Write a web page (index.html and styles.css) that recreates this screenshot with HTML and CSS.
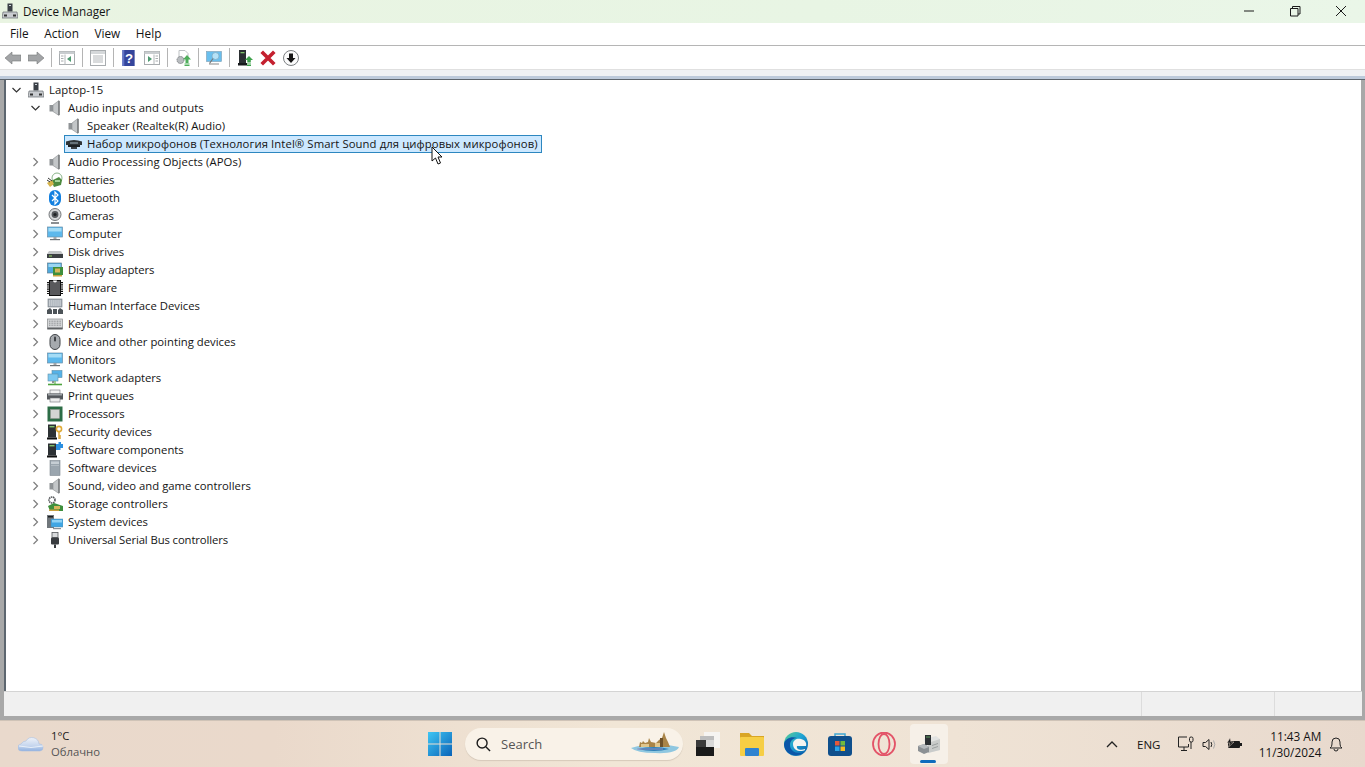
FILE: index.html
```html
<!DOCTYPE html>
<html lang="en">
<head>
<meta charset="utf-8">
<title>Device Manager</title>
<link rel="stylesheet" href="styles.css">
</head>
<body>
<svg class="defs" aria-hidden="true">
  <symbol id="i-laptop" viewBox="0 0 16 16">
    <rect x="5.5" y="0.5" width="5" height="8" fill="#3a3f46"/><rect x="7" y="2" width="2" height="1" fill="#cfd5da"/>
    <path d="M1 9h14l1 6H0z" fill="#c9ccd0" stroke="#666b70" stroke-width=".7"/><rect x="2" y="11.5" width="3" height="2" fill="#333"/><rect x="11" y="11.5" width="3" height="2" fill="#333"/>
  </symbol>
  <symbol id="i-speaker" viewBox="0 0 16 16">
    <rect x="2.5" y="5" width="3.5" height="6.5" fill="#8f9396"/><path d="M6 5l6-4.500v15L6 11.500z" fill="#c3c6c8" stroke="#8b8e90" stroke-width=".6"/><path d="M12 1v14" stroke="#6f7274" stroke-width="1.400"/>
  </symbol>
  <symbol id="i-mic" viewBox="0 0 16 16">
    <path d="M0 5.500Q8 2.500 16 5.500V9H0z" fill="#2f3437"/><rect x="2" y="9" width="12" height="2" fill="#1c2023"/><rect x="5" y="11" width="6" height="2" fill="#3c4145"/><rect x="4" y="6.500" width="8" height="1" fill="#9fb1bd"/>
  </symbol>
  <symbol id="i-battery" viewBox="0 0 16 16">
    <circle cx="10" cy="6" r="5" fill="none" stroke="#8bb58a" stroke-width="1"/><path d="M4 9l8-4 3 3-1 5-7 2z" fill="#4d8a3f"/><path d="M0 11l5-3 2 4-4 3z" fill="#d6b44c"/><path d="M1 6l4 3M0 8l3 2" stroke="#333" stroke-width="1"/><rect x="8" y="8" width="5" height="2" fill="#a6d49a"/>
  </symbol>
  <symbol id="i-bt" viewBox="0 0 16 16">
    <rect x="2" y="0" width="12" height="16" rx="6" fill="#1380e0"/><path d="M5 5l6 6-3 3V2l3 3-6 6" fill="none" stroke="#fff" stroke-width="1.200"/>
  </symbol>
  <symbol id="i-cam" viewBox="0 0 16 16">
    <circle cx="8" cy="6.500" r="6" fill="#d4d6d8" stroke="#74777a"/><circle cx="8" cy="6.500" r="3.400" fill="#55585c"/><circle cx="8" cy="6.500" r="1.600" fill="#1f2225"/><path d="M4 14h8v2H4z" fill="#8c8f92"/>
  </symbol>
  <symbol id="i-monitor" viewBox="0 0 16 16">
    <rect x="0.500" y="1" width="15" height="10" fill="#5cb8ec" stroke="#6a8fa8" stroke-width=".7"/><rect x="1.500" y="2" width="13" height="3.500" fill="#a4dcf6"/><rect x="6.500" y="11" width="3" height="2" fill="#a0a5a9"/><rect x="3" y="13" width="10" height="1.200" fill="#6d7378"/>
  </symbol>
  <symbol id="i-disk" viewBox="0 0 16 16">
    <path d="M2 7h12l2 3H0z" fill="#c4c6c8"/><rect x="0" y="10" width="16" height="4" fill="#3c3f42"/><rect x="2" y="11.500" width="3" height="1" fill="#9adf6a"/>
  </symbol>
  <symbol id="i-display" viewBox="0 0 16 16">
    <rect x="0.500" y="1" width="14" height="10" fill="#4fa9dc" stroke="#5e7f94" stroke-width=".7"/><rect x="1.500" y="2" width="12" height="3" fill="#9bd6f2"/><rect x="6" y="5" width="10" height="8" fill="#3f8f3c"/><rect x="8" y="6.500" width="5" height="4" fill="#d7b65b"/><rect x="6" y="13" width="9" height="1.500" fill="#c8a23e"/>
  </symbol>
  <symbol id="i-firmware" viewBox="0 0 16 16">
    <rect x="2.500" y="0.500" width="11" height="15" fill="#59595c" stroke="#111" stroke-width="1"/><path d="M6 0.500a2 2 0 0 0 4 0" fill="#fff"/><path d="M1 2v12M15 2v12" stroke="#111" stroke-width="2" stroke-dasharray="1.200 1"/>
  </symbol>
  <symbol id="i-hid" viewBox="0 0 16 16">
    <rect x="1" y="1" width="14" height="8" fill="#a8b0b8" stroke="#6f777e" stroke-width=".6"/><path d="M2 3h12M2 5h12M2 7h12" stroke="#e6e8ea" stroke-dasharray="1.300 .8"/><path d="M0 16v-4l3-2 2 2v4M6 16v-5h4v5M11 16v-4l2-2 3 2v4" fill="#4c5358"/>
  </symbol>
  <symbol id="i-kbd" viewBox="0 0 16 16">
    <rect x="0.500" y="3" width="15" height="10" fill="#d5d7d9" stroke="#87898b" stroke-width=".7"/><path d="M2 5.200h12M2 7.200h12M2 9.200h12" stroke="#8a8d90" stroke-dasharray="1 .6"/><rect x="0.500" y="11.500" width="15" height="1.800" fill="#5e6164"/>
  </symbol>
  <symbol id="i-mouse" viewBox="0 0 16 16">
    <rect x="3" y="0.500" width="10" height="15" rx="5" fill="#a6aaae" stroke="#3f4347"/><rect x="7" y="2.500" width="2" height="5" rx="1" fill="#3f4347"/>
  </symbol>
  <symbol id="i-net" viewBox="0 0 16 16">
    <rect x="5" y="0.500" width="10" height="7" fill="#55b2e8" stroke="#5e8fa8" stroke-width=".6"/><rect x="1" y="4" width="10" height="7" fill="#7cc8f0" stroke="#5e8fa8" stroke-width=".6"/><rect x="5" y="11" width="2" height="2" fill="#8c9196"/><path d="M1 14.500h14" stroke="#4ea33e" stroke-width="1.600"/><path d="M8 11v4" stroke="#4ea33e"/>
  </symbol>
  <symbol id="i-print" viewBox="0 0 16 16">
    <rect x="3" y="2" width="10" height="4" fill="#f2f2f2" stroke="#6e7175" stroke-width=".6"/><rect x="0" y="5.500" width="16" height="6" fill="#53575b"/><rect x="1" y="6" width="14" height="1.500" fill="#9ea2a6"/><rect x="3" y="10" width="10" height="4" fill="#eee" stroke="#6e7175" stroke-width=".6"/>
  </symbol>
  <symbol id="i-cpu" viewBox="0 0 16 16">
    <rect x="0.500" y="0.500" width="15" height="15" fill="#2d6d46"/><rect x="3.500" y="3.500" width="9" height="9" fill="#d3d5d2" stroke="#93968f" stroke-width=".5"/>
  </symbol>
  <symbol id="i-sec" viewBox="0 0 16 16">
    <rect x="1" y="0.500" width="8" height="13" fill="#2d3134"/><rect x="2.500" y="2" width="5" height="1.400" fill="#7fc16a"/><rect x="0" y="13.500" width="10" height="2" fill="#111"/><circle cx="12" cy="5" r="2.600" fill="none" stroke="#e0ac3a" stroke-width="1.600"/><path d="M12 7.500V15M12 12h2M12 14h2" stroke="#dca63a" stroke-width="1.400"/>
  </symbol>
  <symbol id="i-comp" viewBox="0 0 16 16">
    <rect x="1" y="1.500" width="8" height="12" fill="#2d3134"/><rect x="2.500" y="3" width="5" height="1.400" fill="#7fc16a"/><rect x="0" y="13.500" width="10" height="2" fill="#111"/><path d="M9 2h2.500V0h2.500v2h2v4h-2.500v2H9z" fill="#2b8fe0"/>
  </symbol>
  <symbol id="i-soft" viewBox="0 0 16 16">
    <rect x="3" y="0.500" width="10" height="15" fill="#9aa5ae" stroke="#7d878f" stroke-width=".6"/><rect x="4" y="1.500" width="8" height="2.500" fill="#c6ced4"/><rect x="4" y="5" width="8" height="1" fill="#b2bbc2"/>
  </symbol>
  <symbol id="i-stor" viewBox="0 0 16 16">
    <circle cx="5" cy="4" r="3" fill="none" stroke="#55585b" stroke-width="1.600" stroke-dasharray="1.500 .6"/><path d="M1 10l6-3 9 3v5H3z" fill="#3f8f3c"/><rect x="7" y="10" width="6" height="3" fill="#d7b65b"/><rect x="2" y="13.500" width="10" height="1.500" fill="#c8a23e"/>
  </symbol>
  <symbol id="i-sys" viewBox="0 0 16 16">
    <rect x="0" y="1" width="7" height="13" fill="#70767b"/><rect x="1" y="2" width="5" height="1.500" fill="#1c1e20"/><rect x="4" y="5" width="12" height="8" fill="#3fa6e4" stroke="#5a8aa6" stroke-width=".5"/><rect x="5" y="6" width="10" height="2.500" fill="#90d2f4"/><rect x="6" y="14" width="8" height="1.200" fill="#8c9196"/>
  </symbol>
  <symbol id="i-usb" viewBox="0 0 16 16">
    <rect x="5" y="0.500" width="6" height="5" fill="#d8dadc" stroke="#55585b" stroke-width=".8"/><rect x="4" y="5.500" width="8" height="7" rx="1" fill="#393c40"/><rect x="7" y="12.500" width="2" height="3.500" fill="#393c40"/>
  </symbol>
  <symbol id="i-chev-r" viewBox="0 0 10 10"><path d="M3 1l4 4-4 4" fill="none" stroke="#7d7d7d" stroke-width="1.200"/></symbol>
  <symbol id="i-chev-d" viewBox="0 0 10 10"><path d="M1 3l4 4 4-4" fill="none" stroke="#333" stroke-width="1.200"/></symbol>
</svg>

<header class="titlebar">
  <svg class="ticon"><use href="#i-laptop"/></svg>
  <span class="ttext">Device Manager</span>
  <div class="winbtns">
    <svg class="wb" viewBox="0 0 46 12"><path d="M18 6h10" stroke="#1a1a1a" fill="none"/></svg>
    <svg class="wb" viewBox="0 0 46 12"><path d="M18.500 3.500h7.500v7.500h-7.500zM20.500 3.500V1.500h7.500v7.500h-2" stroke="#1a1a1a" fill="none"/></svg>
    <svg class="wb" viewBox="0 0 46 12"><path d="M18 1l10 10M28 1L18 11" stroke="#1a1a1a" fill="none"/></svg>
  </div>
</header>

<nav class="menubar">
  <span class="menu">File</span><span class="menu">Action</span><span class="menu">View</span><span class="menu">Help</span>
</nav>

<div class="toolbar">
  <span class="tb"><svg viewBox="0 0 16 14"><path d="M0 7l7-6v3h9v6H7v3z" fill="#a2a4a6" stroke="#77797b" stroke-width=".6"/></svg></span>
  <span class="tb"><svg viewBox="0 0 16 14"><path d="M16 7L9 1v3H0v6h9v3z" fill="#a2a4a6" stroke="#77797b" stroke-width=".6"/></svg></span>
  <i class="sep"></i>
  <span class="tb"><svg viewBox="0 0 16 14"><rect x=".5" y=".5" width="15" height="13" fill="#fff" stroke="#a8acaf"/><rect x=".5" y=".5" width="15" height="2.500" fill="#c9cdd0"/><path d="M6 3.500v10" stroke="#b2b6b9"/><path d="M2 5h2.500M2 7.500h2.500M2 10h2.500" stroke="#a8acaf"/><path d="M12 5v6L8 8z" fill="#4d9a70"/></svg></span>
  <i class="sep"></i>
  <span class="tb"><svg viewBox="0 0 16 16"><rect x=".5" y=".5" width="15" height="15" fill="#fff" stroke="#a8acaf"/><rect x="1" y="1" width="14" height="3" fill="#d5d8da"/><path d="M3 6h10M3 8h10M3 10h10M3 12h10" stroke="#b3b7ba"/></svg></span>
  <i class="sep"></i>
  <span class="tb"><svg viewBox="0 0 14 17"><rect width="13" height="17" fill="#34459c"/><rect x="0" width="2" height="17" fill="#6174c6"/><text class="qmark" x="7" y="13.500">?</text></svg></span>
  <span class="tb"><svg viewBox="0 0 16 14"><rect x=".5" y=".5" width="15" height="13" fill="#fff" stroke="#a8acaf"/><rect x=".5" y=".5" width="15" height="2.500" fill="#c9cdd0"/><path d="M10 3.500v10" stroke="#b2b6b9"/><path d="M11.500 5H14M11.500 7.500H14M11.500 10H14" stroke="#a8acaf"/><path d="M4 5v6l4-3z" fill="#4d9a70"/></svg></span>
  <i class="sep"></i>
  <span class="tb"><svg viewBox="0 0 16 16"><path d="M4 .5h6l3 3v5H4z" fill="#fff" stroke="#bcc0c3"/><circle cx="5.500" cy="10" r="3.500" fill="#b8bcbf" stroke="#82868a" stroke-dasharray="1.500 .6"/><path d="M12 5l4 4.500h-2.500V13h-3V9.500H8z" fill="#4fae5c"/><path d="M9.500 14h5M9.500 15.500h5" stroke="#4fae5c"/></svg></span>
  <i class="sep"></i>
  <span class="tb"><svg viewBox="0 0 16 14"><rect x=".5" y=".5" width="15" height="10" fill="#69bfee" stroke="#7c9db3" stroke-width=".6"/><circle cx="9.500" cy="5" r="3.500" fill="#b5e2f7" stroke="#7ea9c0" stroke-width=".7"/><path d="M7 7.500l-3.500 5" stroke="#777" stroke-width="1.200"/><path d="M3 13h10" stroke="#888"/></svg></span>
  <i class="sep"></i>
  <span class="tb"><svg viewBox="0 0 16 16"><rect x="2" y="0" width="7" height="13" fill="#2b2f32"/><rect x="3.500" y="2" width="4" height="1.300" fill="#7fc16a"/><rect x="1" y="13" width="9" height="2.500" fill="#17191b"/><path d="M12 6l4 4h-2.200v2.500h-3.500V10H8z" fill="#3ea24b"/><path d="M10 14h4M10 15.500h4" stroke="#3ea24b"/></svg></span>
  <span class="tb"><svg viewBox="0 0 14 14"><path d="M1.500 1.500l11 11M12.500 1.500l-11 11" stroke="#c4202f" stroke-width="3.200" fill="none"/></svg></span>
  <span class="tb"><svg viewBox="0 0 16 16"><circle cx="8" cy="8" r="7.500" fill="#fbfbfb" stroke="#7c7f82"/><path d="M6 3.500h4v4.500h2.500L8 13 3.500 8H6z" fill="#151515"/></svg></span>
</div>

<div class="band"></div>

<main class="client">
  <div class="tree">
    <div class="row d0"><svg class="chev"><use href="#i-chev-d"/></svg><span class="node"><svg class="ic"><use href="#i-laptop"/></svg><span class="lbl ls-p">Laptop-15</span></span></div>
    <div class="row d1"><svg class="chev"><use href="#i-chev-d"/></svg><span class="node"><svg class="ic"><use href="#i-speaker"/></svg><span class="lbl ls-p">Audio inputs and outputs</span></span></div>
    <div class="row d2"><span class="chev"></span><span class="node"><svg class="ic"><use href="#i-speaker"/></svg><span class="lbl">Speaker (Realtek(R) Audio)</span></span></div>
    <div class="row d2"><span class="chev"></span><span class="node sel"><svg class="ic"><use href="#i-mic"/></svg><span class="lbl ls-p">Набор микрофонов (Технология Intel® Smart Sound для цифровых микрофонов)</span></span></div>
    <div class="row d1"><svg class="chev"><use href="#i-chev-r"/></svg><span class="node"><svg class="ic"><use href="#i-speaker"/></svg><span class="lbl ls-p">Audio Processing Objects (APOs)</span></span></div>
    <div class="row d1"><svg class="chev"><use href="#i-chev-r"/></svg><span class="node"><svg class="ic"><use href="#i-battery"/></svg><span class="lbl ls-m">Batteries</span></span></div>
    <div class="row d1"><svg class="chev"><use href="#i-chev-r"/></svg><span class="node"><svg class="ic"><use href="#i-bt"/></svg><span class="lbl">Bluetooth</span></span></div>
    <div class="row d1"><svg class="chev"><use href="#i-chev-r"/></svg><span class="node"><svg class="ic"><use href="#i-cam"/></svg><span class="lbl ls-m">Cameras</span></span></div>
    <div class="row d1"><svg class="chev"><use href="#i-chev-r"/></svg><span class="node"><svg class="ic"><use href="#i-monitor"/></svg><span class="lbl ls-p">Computer</span></span></div>
    <div class="row d1"><svg class="chev"><use href="#i-chev-r"/></svg><span class="node"><svg class="ic"><use href="#i-disk"/></svg><span class="lbl ls-m">Disk drives</span></span></div>
    <div class="row d1"><svg class="chev"><use href="#i-chev-r"/></svg><span class="node"><svg class="ic"><use href="#i-display"/></svg><span class="lbl ls-m">Display adapters</span></span></div>
    <div class="row d1"><svg class="chev"><use href="#i-chev-r"/></svg><span class="node"><svg class="ic"><use href="#i-firmware"/></svg><span class="lbl ls-m">Firmware</span></span></div>
    <div class="row d1"><svg class="chev"><use href="#i-chev-r"/></svg><span class="node"><svg class="ic"><use href="#i-hid"/></svg><span class="lbl">Human Interface Devices</span></span></div>
    <div class="row d1"><svg class="chev"><use href="#i-chev-r"/></svg><span class="node"><svg class="ic"><use href="#i-kbd"/></svg><span class="lbl ls-m">Keyboards</span></span></div>
    <div class="row d1"><svg class="chev"><use href="#i-chev-r"/></svg><span class="node"><svg class="ic"><use href="#i-mouse"/></svg><span class="lbl">Mice and other pointing devices</span></span></div>
    <div class="row d1"><svg class="chev"><use href="#i-chev-r"/></svg><span class="node"><svg class="ic"><use href="#i-monitor"/></svg><span class="lbl">Monitors</span></span></div>
    <div class="row d1"><svg class="chev"><use href="#i-chev-r"/></svg><span class="node"><svg class="ic"><use href="#i-net"/></svg><span class="lbl ls-m">Network adapters</span></span></div>
    <div class="row d1"><svg class="chev"><use href="#i-chev-r"/></svg><span class="node"><svg class="ic"><use href="#i-print"/></svg><span class="lbl ls-m">Print queues</span></span></div>
    <div class="row d1"><svg class="chev"><use href="#i-chev-r"/></svg><span class="node"><svg class="ic"><use href="#i-cpu"/></svg><span class="lbl ls-m">Processors</span></span></div>
    <div class="row d1"><svg class="chev"><use href="#i-chev-r"/></svg><span class="node"><svg class="ic"><use href="#i-sec"/></svg><span class="lbl">Security devices</span></span></div>
    <div class="row d1"><svg class="chev"><use href="#i-chev-r"/></svg><span class="node"><svg class="ic"><use href="#i-comp"/></svg><span class="lbl">Software components</span></span></div>
    <div class="row d1"><svg class="chev"><use href="#i-chev-r"/></svg><span class="node"><svg class="ic"><use href="#i-soft"/></svg><span class="lbl">Software devices</span></span></div>
    <div class="row d1"><svg class="chev"><use href="#i-chev-r"/></svg><span class="node"><svg class="ic"><use href="#i-speaker"/></svg><span class="lbl">Sound, video and game controllers</span></span></div>
    <div class="row d1"><svg class="chev"><use href="#i-chev-r"/></svg><span class="node"><svg class="ic"><use href="#i-stor"/></svg><span class="lbl">Storage controllers</span></span></div>
    <div class="row d1"><svg class="chev"><use href="#i-chev-r"/></svg><span class="node"><svg class="ic"><use href="#i-sys"/></svg><span class="lbl">System devices</span></span></div>
    <div class="row d1"><svg class="chev"><use href="#i-chev-r"/></svg><span class="node"><svg class="ic"><use href="#i-usb"/></svg><span class="lbl ls-m">Universal Serial Bus controllers</span></span></div>
  </div>
  <div class="status"><span class="cell c1"></span><span class="cell c2"></span><span class="cell c3"></span></div>
</main>

<svg class="cursor" viewBox="0 0 12 19"><path d="M1 1v14l3.500-3 2.500 6 2.500-1-2.500-6H11z" fill="#fff" stroke="#111" stroke-width="1"/></svg>

<footer class="taskbar">
  <div class="weather">
    <svg class="cloud" viewBox="0 0 26 18"><defs><linearGradient id="cl" x1="0" y1="0" x2="0" y2="1"><stop offset="0" stop-color="#eef2f8"/><stop offset=".6" stop-color="#c6d6ee"/><stop offset="1" stop-color="#8fb0e0"/></linearGradient></defs><path d="M4 16a3.500 3.500 0 0 1-1-7 6 6 0 0 1 5-3 7 7 0 0 1 13 3 3.500 3.500 0 0 1 1 7z" fill="url(#cl)" stroke="#a9bfe0" stroke-width=".6"/><path d="M1 11q12 3 24 0" fill="none" stroke="#f4f7fb" stroke-width=".8"/></svg>
    <div class="wtext"><span class="temp">1°C</span><span class="cond">Облачно</span></div>
  </div>
  <div class="center">
    <svg class="start" viewBox="0 0 24 24"><defs><linearGradient id="wl" x1="0" y1="0" x2="1" y2="1"><stop offset="0" stop-color="#3fc6f4"/><stop offset="1" stop-color="#0a63b8"/></linearGradient></defs><path d="M0 0h11.500v11.500H0zM12.500 0H24v11.500H12.500zM0 12.500h11.500V24H0zM12.500 12.500H24V24H12.500z" fill="url(#wl)"/></svg>
    <div class="search">
      <svg class="sicon" viewBox="0 0 16 16"><circle cx="6.500" cy="6.500" r="5.300" fill="none" stroke="#1c1c1c" stroke-width="1.500"/><path d="M10.500 10.500l4.500 4.500" stroke="#1c1c1c" stroke-width="1.500"/></svg>
      <span class="stext">Search</span>
      <svg class="sart" viewBox="0 0 48 22"><path d="M0 16q24-7 48-1-3 7-24 6-18 0-24-5z" fill="#8fc7e0"/><path d="M6 17q18-4 32 0-14 4-32 0z" fill="#2f7fb5"/><path d="M8 15l1-5 2 1 1-2 2 2 3-1 1-4 2 4 5 1 3-3 3-2 2-6 2 6 2 4 2 5H8z" fill="#a98447"/><path d="M10 12h8v3h-8zM24 11h6v4h-6z" fill="#e0c68d"/><path d="M29 6h3v9h-3z" fill="#6e5128"/><path d="M6 17h26" stroke="#a892c4" stroke-width=".8"/></svg>
    </div>
    <svg class="app tv" viewBox="0 0 24 24"><rect x="8" y="0" width="16" height="16" fill="#f6f4f1"/><rect x="4" y="4" width="14" height="14" fill="#bdbdbd"/><rect x="0" y="8" width="18" height="16" fill="#1a1a1a"/><rect x="0" y="8" width="10" height="7" fill="#3a3a3a"/><rect x="10" y="8" width="8" height="7" fill="#d8d8d8"/></svg>
    <svg class="app fold" viewBox="0 0 24 24"><path d="M0 1h9l3 3h12v3H0z" fill="#d9a524"/><rect y="5" width="24" height="19" rx="1" fill="#f6ce45"/><rect x="5" y="16" width="14" height="8" rx="1" fill="#2f83d0"/></svg>
    <svg class="app edge" viewBox="0 0 24 24"><defs><linearGradient id="eg" x1="0" y1="0" x2="1" y2="1"><stop offset="0" stop-color="#5fd08f"/><stop offset=".45" stop-color="#1ea4d4"/><stop offset="1" stop-color="#0c59a6"/></linearGradient></defs><circle cx="12" cy="12" r="12" fill="url(#eg)"/><path d="M0 12C1 6 8 4 13 6c-4 0-7 3-7 7 0 6 7 10 14 7-4 4-10 4-14 2-4-2-6-6-6-10z" fill="#0b56a8"/><path d="M9 12c0-4 4-6 8-5 4 1 6 4 5 7h-9c-1 3 3 5 8 3v1c-3 2-12 2-12-6z" fill="#f4f4f0"/></svg>
    <svg class="app store" viewBox="0 0 24 24"><path d="M7 5V2h10v3" fill="none" stroke="#3fa6d4" stroke-width="1.500"/><rect y="4" width="24" height="20" rx="3" fill="#0f4f8c"/><rect x="7" y="9" width="4.500" height="4.500" fill="#e5593a"/><rect x="12.500" y="9" width="4.500" height="4.500" fill="#70b93d"/><rect x="7" y="14.500" width="4.500" height="4.500" fill="#2aa4ea"/><rect x="12.500" y="14.500" width="4.500" height="4.500" fill="#f6bb20"/></svg>
    <svg class="app opera" viewBox="0 0 24 24"><ellipse cx="12" cy="12" rx="11" ry="11.500" fill="none" stroke="#e35368" stroke-width="1.800"/><ellipse cx="12" cy="12" rx="5.500" ry="10" fill="none" stroke="#e35368" stroke-width="1.800"/></svg>
    <div class="active">
      <svg class="dm" viewBox="0 0 22 20"><path d="M6 5l12-3 4 3v11L10 19z" fill="#e2e3e2"/><path d="M10 9l12-4v11l-12 3z" fill="#c9cbca"/><path d="M14 11l6-2v1l-6 2zM14 14l6-2v1l-6 2z" fill="#9a9d9e"/><rect x="7" y="1" width="6" height="10" fill="#2d3134"/><rect x="8" y="2.500" width="4" height="1" fill="#5f9f60"/><path d="M0 12l6-2 5 3v5l-5 2-6-3z" fill="#8b9094"/><path d="M0 12l6-2 5 3-5 2z" fill="#b6babd"/></svg>
      <span class="ind"></span>
    </div>
  </div>
  <div class="tray">
    <svg class="caret" viewBox="0 0 12 7"><path d="M1 6l5-5 5 5" fill="none" stroke="#222" stroke-width="1.300"/></svg>
    <span class="lang">ENG</span>
    <svg class="t-net" viewBox="0 0 16 16"><path d="M9 1H.5v10h10V8M3 14.500h6M6 11v3.500" fill="none" stroke="#222"/><rect x="11.500" y="1" width="3.500" height="5" rx="1.500" fill="none" stroke="#222"/><path d="M13 6v7" stroke="#222"/></svg>
    <svg class="t-vol" viewBox="0 0 14 13"><path d="M1 4.500h2.500L7 1.500v10L3.500 8.500H1z" fill="none" stroke="#222"/><path d="M9 4q1.500 2.500 0 5" fill="none" stroke="#222"/><path d="M11.500 2.500q2.500 4 0 8" fill="none" stroke="#aaa"/></svg>
    <svg class="t-bat" viewBox="0 0 16 12"><rect x="2" y="3" width="12" height="7" rx="1" fill="#1c1c1c"/><rect x="14" y="5" width="2" height="3" fill="#1c1c1c"/><path d="M4 0L1 5h3L2.500 9 8 4H5z" fill="#1c1c1c" stroke="#e8d8cc" stroke-width=".5"/></svg>
    <div class="clock"><span>11:43 AM</span><span>11/30/2024</span></div>
    <svg class="bell" viewBox="0 0 14 16"><path d="M1 12q2-1 2-4V6a4 4 0 0 1 8 0v2q0 3 2 4z" fill="none" stroke="#222"/><path d="M5 13a2 2 0 0 0 4 0" fill="none" stroke="#222"/></svg>
  </div>
</footer>
</body>
</html>
```
FILE: styles.css
```css
* { box-sizing: border-box; }
html, body { margin: 0; height: 767px; overflow: hidden; }
body {
  position: relative;
  display: flex;
  flex-direction: column;
  width: 1365px;
  font-family: "Open Sans", "Noto Sans", sans-serif;
  font-size: 11.3px;
  color: #141414;
  background: #fff;
}
.defs { width: 0; height: 0; position: absolute; }

.titlebar {
  height: 23px;
  display: flex;
  align-items: center;
  padding: 0 0 1px 2px;
  background: linear-gradient(90deg, #e9f4e2, #e8f5e4 60%, #eaf6e8);
}
.ticon { width: 16px; height: 16px; flex: none; }
.ttext { margin-left: 5px; font-size: 11.7px; }
.winbtns { margin-left: auto; display: flex; padding-right: 1px; }
.wb { width: 46px; height: 12px; }

.menubar {
  height: 23px;
  display: flex;
  align-items: center;
  padding: 0 0 2px 4px;
  background: #fff;
  border-bottom: 1px solid #b5b5b5;
}
.menu { padding: 0 7px; font-size: 11.8px; margin-right: 1.6px; }
.menu:first-child { margin-left: -1px; }

.toolbar {
  height: 23px;
  display: flex;
  align-items: center;
  padding: 0 0 0 1.5px;
  background: #fff;
}
.tb { width: 23px; height: 21px; display: flex; align-items: center; justify-content: center; flex: none; }
.tb svg { width: 16px; height: 16px; }
.sep { width: 1px; height: 19px; margin: 0 4px 0 3px; background: #b4b4b4; flex: none; }
.qmark { font-family: "Liberation Sans", sans-serif; font-size: 14px; font-weight: 700; fill: #fff; text-anchor: middle; }

.band {
  height: 11px;
  background: linear-gradient(180deg, #eef1f4 0, #eef1f4 64%, #bccadb 64%, #bccadb 90%, #5d666f 90%);
  border-top: 1px solid #e0e0e0;
}

.client {
  flex: 1;
  display: flex;
  flex-direction: column;
  background: #a8a8a8;
  padding: 0 3px 4px 4px;
  min-height: 0;
}
.tree {
  flex: 1;
  background: #fff;
  border-left: 2px solid #5d666f;
  padding-top: 1px;
  margin-right: 1px;
}
.row {
  height: 18px;
  display: flex;
  align-items: center;
  white-space: nowrap;
}
.d0 { padding-left: 1px; }
.d1 { padding-left: 20px; }
.d2 { padding-left: 39px; }
.chev { width: 19px; height: 10px; flex: none; }
.node {
  height: 18px;
  display: inline-flex;
  align-items: center;
  padding: 0 4px 0 2px;
}
.sel {
  background: #cce8ff;
  outline: 1px solid #2d87c0;
  outline-offset: -1px;
}
.ic { width: 16px; height: 16px; flex: none; }
.lbl { margin-left: 5px; line-height: 18px; }
.ls-p { letter-spacing: .09px; }
.ls-m { letter-spacing: -.1px; }

.status {
  height: 25px;
  flex: none;
  display: flex;
  background: #f0f0f0;
  border-top: 1px solid #d4d4d4;
}
.cell { border-right: 1px solid #dcdcdc; }
.c1 { width: 1138px; }
.c2 { width: 133px; }
.c3 { width: 86px; border-right: 0; }

.cursor { position: absolute; left: 431px; top: 146px; width: 12px; height: 19px; }

.taskbar {
  height: 47px;
  flex: none;
  display: flex;
  align-items: center;
  background: linear-gradient(90deg, #e9d9cc 0, #ead9cb 20%, #f1e6d6 45%, #efe3d5 70%, #e8d9cd 100%);
  border-top: 1px solid #cfc3b7;
}
.weather { display: flex; align-items: center; width: 428px; padding-left: 18px; flex: none; }
.cloud { width: 26px; height: 18px; flex: none; }
.wtext { display: flex; flex-direction: column; margin-left: 7px; line-height: 16px; }
.temp { color: #1a1a1a; }
.cond { color: #555; }
.center { display: flex; align-items: center; flex: none; height: 46px; }
.start { width: 24px; height: 24px; flex: none; }
.search {
  width: 218px;
  height: 32px;
  margin-left: 13px;
  padding-left: 11px;
  border-radius: 16px;
  background: #f9f2e8;
  box-shadow: 0 1px 1px #d6c9ba;
  display: flex;
  align-items: center;
  position: relative;
  flex: none;
}
.sicon { width: 15px; height: 15px; flex: none; }
.stext { margin-left: 10px; font-size: 13px; color: #555; }
.sart { position: absolute; right: 4px; top: 4px; width: 48px; height: 22px; }
.app { width: 24px; height: 24px; flex: none; }
.tv { margin-left: 13px; }
.fold { margin-left: 20px; }
.edge { margin-left: 20px; }
.store { margin-left: 20px; }
.opera { margin-left: 20px; }
.active {
  width: 38px;
  height: 40px;
  margin-left: 14px;
  border-radius: 4px;
  background: #f6f0e8;
  position: relative;
  display: flex;
  align-items: center;
  justify-content: center;
  flex: none;
}
.dm { width: 22px; height: 20px; }
.ind { position: absolute; left: 10px; bottom: 1px; width: 16px; height: 3px; border-radius: 2px; background: #0f6cbd; }
.tray { display: flex; align-items: center; flex: 1; padding-left: 158px; height: 46px; }
.caret { width: 12px; height: 7px; flex: none; }
.lang { margin-left: 19px; font-size: 11.5px; }
.t-net { width: 16px; height: 16px; margin-left: 18px; flex: none; }
.t-vol { width: 14px; height: 13px; margin-left: 8px; flex: none; }
.t-bat { width: 16px; height: 12px; margin-left: 10px; flex: none; }
.clock { display: flex; flex-direction: column; align-items: flex-end; margin-left: 16px; width: 63px; font-size: 11.8px; line-height: 16px; }
.bell { width: 14px; height: 16px; margin-left: 8px; flex: none; }
```
